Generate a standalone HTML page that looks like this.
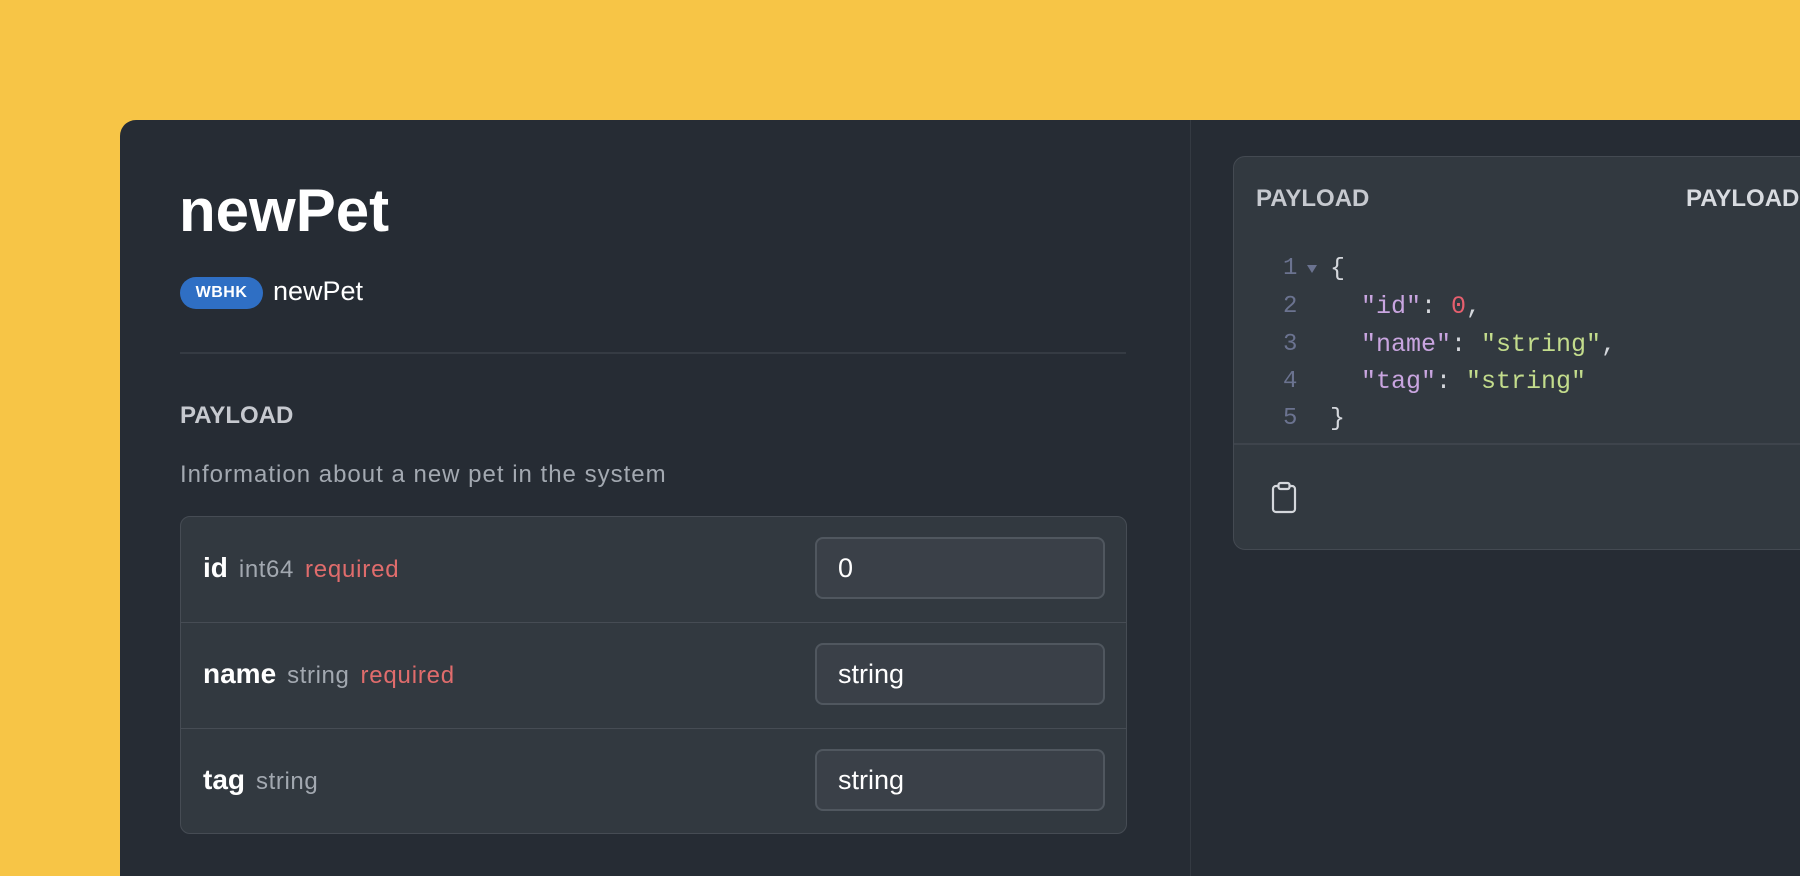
<!DOCTYPE html>
<html><head><style>
*{box-sizing:border-box;margin:0;padding:0}
html,body{width:1800px;height:876px;overflow:hidden}
body{background:#f7c546;font-family:"Liberation Sans",sans-serif;position:relative}
.card{position:absolute;left:120px;top:120px;width:1700px;height:756px;background:#262c34;border-radius:16px 0 0 0}
.vdiv{position:absolute;left:1190px;top:120px;width:1px;height:756px;background:#343a42}
.t{position:absolute;color:#fff}
.row{position:absolute;left:0;width:946px;height:105px;border-top:1px solid #464c54}
.inp{position:absolute;left:634px;top:20px;width:290px;height:62px;background:#3a4048;border:2px solid #50575f;border-radius:8px;color:#fff;font-size:27px;padding:14px 21px}
.lab{position:absolute;left:22px;top:35px;font-size:28px;font-weight:bold;color:#fff}
.lab span{font-weight:normal;font-size:24px;letter-spacing:0.6px;color:#a2a8b0;margin-left:11px}
.lab em{font-style:normal;font-weight:normal;font-size:24px;letter-spacing:0.8px;color:#e06c6c;margin-left:11px}
.cl{position:absolute;font-family:"Liberation Mono",monospace;font-size:25px;color:#d4d7dc;white-space:pre;line-height:30px}
.ln{position:absolute;left:1283px;font-family:"Liberation Mono",monospace;font-size:24px;color:#6b7390;line-height:30px}
.k{color:#c9a5e0}.s{color:#c3dc8c}
</style></head><body>
<div class="card"></div>
<div class="vdiv"></div>
<div class="t" style="left:179px;top:176px;font-size:60px;font-weight:bold">newPet</div>
<div style="position:absolute;left:180px;top:277px;width:83px;height:32px;border-radius:16px;background:#2f6fc4;color:#fff;font-size:16px;font-weight:bold;text-align:center;line-height:32px;letter-spacing:0.5px">WBHK</div>
<div class="t" style="left:273px;top:276px;font-size:27px">newPet</div>
<div style="position:absolute;left:180px;top:352px;width:946px;height:2px;background:#353b43"></div>
<div class="t" style="left:180px;top:402px;font-size:24px;font-weight:bold;color:#c6c9cf">PAYLOAD</div>
<div class="t" style="left:180px;top:461px;font-size:24px;letter-spacing:1px;color:#a3a9b1">Information about a new pet in the system</div>
<div style="position:absolute;left:180px;top:516px;width:947px;height:318px;background:#323940;border:1px solid #464c54;border-radius:10px;overflow:hidden">
 <div class="row" style="top:0;border-top:none"><div class="lab">id<span>int64</span><em>required</em></div><div class="inp">0</div></div>
 <div class="row" style="top:105px"><div class="lab">name<span>string</span><em>required</em></div><div class="inp">string</div></div>
 <div class="row" style="top:211px"><div class="lab">tag<span>string</span></div><div class="inp">string</div></div>
</div>
<div style="position:absolute;left:1233px;top:156px;width:600px;height:394px;background:#323940;border:1px solid #444a52;border-radius:12px"></div>
<div class="t" style="left:1256px;top:185px;font-size:24px;font-weight:bold;color:#c6c9cf">PAYLOAD</div>
<div class="t" style="left:1686px;top:185px;font-size:24px;font-weight:bold;color:#d8dbe0">PAYLOAD</div>
<div class="ln" style="top:254px">1</div>
<div class="ln" style="top:292px">2</div>
<div class="ln" style="top:330px">3</div>
<div class="ln" style="top:367px">4</div>
<div class="ln" style="top:404px">5</div>
<div style="position:absolute;left:1307px;top:265px;width:0;height:0;border-left:5px solid transparent;border-right:5px solid transparent;border-top:8px solid #6b7390"></div>
<div class="cl" style="left:1330px;top:254px">{</div>
<div class="cl" style="left:1361px;top:292px"><span class="k">"id"</span>: <span style="color:#e65f6e">0</span>,</div>
<div class="cl" style="left:1361px;top:330px"><span class="k">"name"</span>: <span class="s">"string"</span>,</div>
<div class="cl" style="left:1361px;top:367px"><span class="k">"tag"</span>: <span class="s">"string"</span></div>
<div class="cl" style="left:1330px;top:404px">}</div>
<div style="position:absolute;left:1234px;top:443px;width:566px;height:2px;background:#3e444c"></div>
<svg style="position:absolute;left:1270px;top:481px" width="30" height="34" viewBox="0 0 30 34"><rect x="3" y="5" width="22" height="26" rx="3" fill="none" stroke="#d4d7dc" stroke-width="2.2"/><rect x="8.5" y="2" width="11" height="6" rx="2" fill="#323940" stroke="#d4d7dc" stroke-width="2.2"/></svg>
</body></html>
